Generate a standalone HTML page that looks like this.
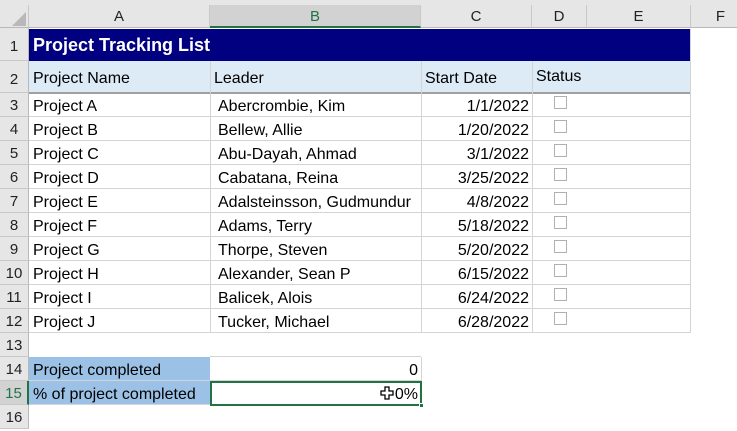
<!DOCTYPE html>
<html><head><style>
*{margin:0;padding:0;box-sizing:border-box}
body{width:737px;height:428px;overflow:hidden;background:#fff;font-family:"Liberation Sans",Arial,sans-serif;font-size:16px;color:#000;position:relative}
.a{position:absolute}
.ch{top:5px;height:23px;background:#e6e6e6;border-right:1px solid #c8c8c8;border-bottom:1px solid #b8b8b8;text-align:center;line-height:23px;font-size:15px;color:#222}
.rh{left:0;width:29px;background:#e6e6e6;border-bottom:1px solid #c8c8c8;border-right:1px solid #b8b8b8;text-align:center;font-size:15px;color:#222}
.vl{width:1px;background:#d4d4d4}
.hl{height:1px;background:#d4d4d4}
.t{white-space:nowrap}
.cb{width:13px;height:13px;border:1px solid #b0b0b0;background:#fff}
</style></head><body>
<div class="a" style="left:0;top:0;width:737px;height:5px;background:#e6e6e6"></div>
<div class="a ch" style="left:0;width:29px"></div>
<svg class="a" style="left:12px;top:12px" width="14" height="14"><polygon points="14,0 14,14 0,14" fill="#b8b8b8"/></svg>
<div class="a ch" style="left:29px;width:181px">A</div>
<div class="a ch" style="left:210px;width:211px;background:#d2d2d2;border-bottom:2px solid #217346;color:#217346">B</div>
<div class="a ch" style="left:421px;width:111px">C</div>
<div class="a ch" style="left:532px;width:55px">D</div>
<div class="a ch" style="left:587px;width:104px">E</div>
<div class="a ch" style="left:691px;width:60px">F</div>

<div class="a rh" style="top:28px;height:33px;line-height:38px">1</div>
<div class="a rh" style="top:61px;height:32px;line-height:38px">2</div>
<div id="rows"></div>

<div class="a" style="left:29px;top:61px;width:661px;height:32px;background:#ddebf7"></div>
<div class="a" style="left:29px;top:29px;width:661px;height:32px;background:#000080"></div>
<div class="a t" style="left:33px;top:35px;color:#fff;font-weight:bold;font-size:18px">Project Tracking List</div>
<div class="a" style="left:29px;top:92px;width:661px;height:2px;background:#a0a0a0"></div>

<div class="a vl" style="left:210px;top:61px;height:272px"></div>
<div class="a vl" style="left:421px;top:61px;height:272px"></div>
<div class="a vl" style="left:532px;top:61px;height:272px"></div>
<div class="a vl" style="left:690px;top:29px;height:304px"></div>
<div class="a vl" style="left:421px;top:357px;height:24px"></div>

<div class="a t" style="left:33px;top:70px">Project Name</div>
<div class="a t" style="left:214px;top:70px">Leader</div>
<div class="a t" style="left:425px;top:70px">Start Date</div>
<div class="a t" style="left:536px;top:68px">Status</div>

<div class="a" style="left:29px;top:357px;width:181px;height:48px;background:#9bc2e6"></div>
<div class="a hl" style="left:29px;top:380px;width:392px"></div>
<div class="a hl" style="left:29px;top:404px;width:181px"></div>
<div class="a hl" style="left:210px;top:356px;width:211px"></div>
<div class="a t" style="left:33px;top:362px">Project completed</div>
<div class="a t" style="left:33px;top:386px">% of project completed</div>
<div class="a t" style="right:319px;top:362px">0</div>
<div class="a" style="left:210px;top:381px;width:212px;height:25px;border:2px solid #217346"></div>
<div class="a" style="left:419px;top:403px;width:5px;height:5px;background:#217346;border:1px solid #fff"></div>
<div class="a t" style="right:319px;top:386px">0%</div>
<svg class="a" style="left:380px;top:386px" width="15" height="15"><path d="M5 1h4v4h4v4h-4v4h-4v-4h-4v-4h4z" fill="#fff" stroke="#000" stroke-width="1.3"/></svg>

<script>
var d=[["Project A","Abercrombie, Kim","1/1/2022"],["Project B","Bellew, Allie","1/20/2022"],["Project C","Abu-Dayah, Ahmad","3/1/2022"],["Project D","Cabatana, Reina","3/25/2022"],["Project E","Adalsteinsson, Gudmundur","4/8/2022"],["Project F","Adams, Terry","5/18/2022"],["Project G","Thorpe, Steven","5/20/2022"],["Project H","Alexander, Sean P","6/15/2022"],["Project I","Balicek, Alois","6/24/2022"],["Project J","Tucker, Michael","6/28/2022"]];
var h="";
for(var r=3;r<=16;r++){var y=93+(r-3)*24;
h+='<div class="a rh" style="top:'+y+'px;height:24px;line-height:26px;'+(r==15?'background:#d2d2d2;color:#217346;border-right:2px solid #217346':'')+'">'+r+'</div>';}
for(var i=0;i<10;i++){var y=93+i*24;
h+='<div class="a hl" style="left:29px;top:'+(y+23)+'px;width:661px"></div>';
h+='<div class="a t" style="left:33px;top:'+(y+5)+'px">'+d[i][0]+'</div>';
h+='<div class="a t" style="left:218px;top:'+(y+5)+'px">'+d[i][1]+'</div>';
h+='<div class="a t" style="right:'+(737-529)+'px;top:'+(y+5)+'px">'+d[i][2]+'</div>';
h+='<div class="a cb" style="left:554px;top:'+(y+3)+'px"></div>';}
document.getElementById("rows").outerHTML=h;
</script>
</body></html>
